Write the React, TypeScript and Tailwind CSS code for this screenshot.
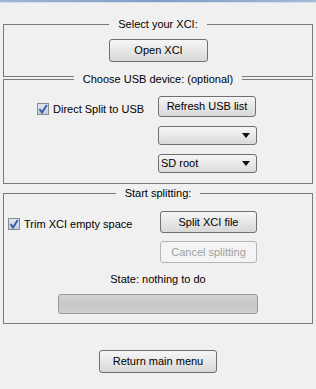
import React from "react";

const font = { fontFamily: '"Liberation Sans", Arial, sans-serif' };

const Button = ({
  label,
  className,
  disabled,
}: {
  label: string;
  className: string;
  disabled?: boolean;
}) => (
  <button
    className={
      disabled
        ? `flex items-center justify-center rounded-[3px] border border-[#b5b5b5] bg-[#f4f4f4] text-[11px] text-[#a0a0a0] ${className}`
        : `flex items-center justify-center rounded-[3px] border border-[#707070] bg-gradient-to-b from-[#f6f6f6] to-[#d8d8d8] text-[11px] text-black ${className}`
    }
  >
    {label}
  </button>
);

const Check = ({ label }: { label: string }) => (
  <div className="flex items-center gap-[4px] text-[11px] text-black">
    <div className="flex h-[12px] w-[12px] items-center justify-center border border-[#8a8a8a] bg-gradient-to-b from-[#dfe6f2] to-[#c3cde0]">
      <svg width="10" height="10" viewBox="0 0 10 10">
        <path d="M1.5 5 L4 8.5 L8.8 1" stroke="#3a5fa8" strokeWidth="2" fill="none" />
      </svg>
    </div>
    <span>{label}</span>
  </div>
);

const Select = ({ value, className }: { value: string; className: string }) => (
  <div
    className={`flex items-center justify-between rounded-[3px] border border-[#707070] bg-gradient-to-b from-[#f6f6f6] to-[#dadada] pl-[2px] pr-[6px] text-[11px] text-black ${className}`}
  >
    <span>{value}</span>
    <svg width="8" height="5" viewBox="0 0 8 5">
      <path d="M0 0 H8 L4 5 Z" fill="#111" />
    </svg>
  </div>
);

const Group = ({
  title,
  className,
  children,
}: {
  title: string;
  className: string;
  children: React.ReactNode;
}) => (
  <div className={`ml-[3px] flex w-[310px] flex-col border border-[#787878] ${className}`}>
    <span className="mx-auto -mt-[8px] bg-[#f0f0f0] px-[9px] text-[11px] leading-[14px] text-black">
      {title}
    </span>
    {children}
  </div>
);

export default function App() {
  return (
    <div className="flex h-[389px] w-[316px] flex-col overflow-hidden bg-[#f0f0f0]" style={font}>
      <div className="h-[2px] bg-gradient-to-r from-[#9fb5d2] via-[#7f9ec6] to-[#a4bad6]" />
      <div className="h-[1px] bg-[#d6e0ec]" />

      <Group title="Select your XCI:" className="mt-[21px] h-[53px]">
        <Button label="Open XCI" className="ml-[105px] mt-[8px] h-[23px] w-[99px]" />
      </Group>

      <Group title="Choose USB device: (optional)" className="mt-[2px] h-[105px]">
        <div className="mt-[10px] flex">
          <div className="ml-[33px] mt-[5px]">
            <Check label="Direct Split to USB" />
          </div>
          <div className="ml-auto mr-[55px] flex flex-col gap-[9px]">
            <Button label="Refresh USB list" className="h-[21px] w-[98px]" />
            <Select value="" className="h-[19px] w-[99px]" />
            <Select value="SD root" className="h-[19px] w-[99px]" />
          </div>
        </div>
      </Group>

      <Group title="Start splitting:" className="mt-[9px] h-[131px]">
        <div className="mt-[11px] flex">
          <div className="ml-[4px] mt-[5px]">
            <Check label="Trim XCI empty space" />
          </div>
          <div className="ml-auto mr-[55px] flex flex-col gap-[8px]">
            <Button label="Split XCI file" className="h-[22px] w-[97px]" />
            <Button label="Cancel splitting" className="h-[22px] w-[97px]" disabled />
          </div>
        </div>
        <div className="mt-[8px] text-center text-[11px] text-black">State: nothing to do</div>
        <div className="ml-[54px] mt-[6px] h-[20px] w-[200px] rounded-[3px] border border-[#9a9a9a] bg-gradient-to-b from-[#d4d4d4] via-[#c6c6c6] to-[#cfcfcf]" />
      </Group>

      <Button label="Return main menu" className="ml-[99px] mt-[26px] h-[23px] w-[118px]" />
    </div>
  );
}
